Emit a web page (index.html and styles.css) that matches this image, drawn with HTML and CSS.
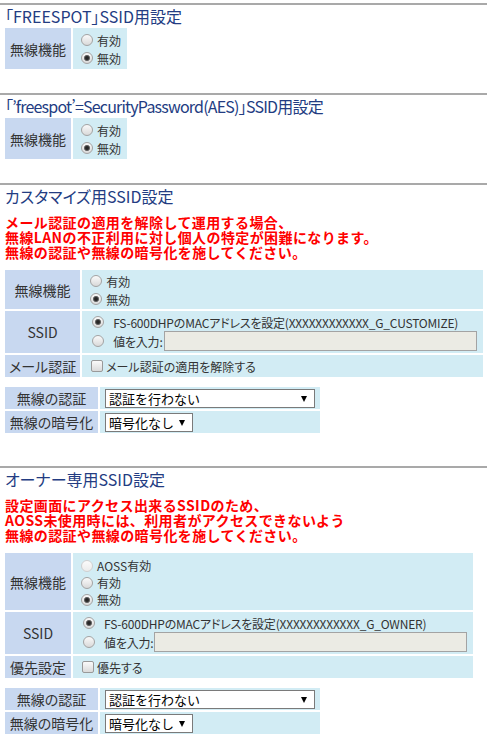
FILE: index.html
```html
<!DOCTYPE html>
<html lang="ja">
<head>
<meta charset="utf-8">
<title>SSID設定</title>
<link rel="stylesheet" href="styles.css">
</head>
<body>
<section class="sec">
  <h2 class="sec-title">「FREESPOT」SSID用設定</h2>
  <table class="form">
    <tr>
      <th class="th-66">無線機能</th>
      <td class="opts opts-a">
        <label class="opt"><input type="radio" class="radio" name="f1">有効</label>
        <label class="opt"><input type="radio" class="radio" name="f1" checked>無効</label>
      </td>
    </tr>
  </table>
</section>

<section class="sec">
  <h2 class="sec-title sec-title-tight">「’freespot’=SecurityPassword(AES)」SSID用設定</h2>
  <table class="form">
    <tr>
      <th class="th-66">無線機能</th>
      <td class="opts opts-a">
        <label class="opt"><input type="radio" class="radio" name="f2">有効</label>
        <label class="opt"><input type="radio" class="radio" name="f2" checked>無効</label>
      </td>
    </tr>
  </table>
</section>

<section class="sec sec-long">
  <h2 class="sec-title">カスタマイズ用SSID設定</h2>
  <p class="note">メール認証の適用を解除して運用する場合、<br>無線LANの不正利用に対し個人の特定が困難になります。<br>無線の認証や無線の暗号化を施してください。</p>
  <table class="form form-main">
    <tr>
      <th class="th-75">無線機能</th>
      <td class="wide opts opts-b">
        <label class="opt"><input type="radio" class="radio" name="c1">有効</label>
        <label class="opt"><input type="radio" class="radio" name="c1" checked>無効</label>
      </td>
    </tr>
    <tr>
      <th>SSID</th>
      <td class="wide ssid">
        <label class="opt"><input type="radio" class="radio" name="c2" checked>FS-600DHPのMACアドレスを設定(XXXXXXXXXXXX_G_CUSTOMIZE)</label>
        <label class="opt opt-input"><input type="radio" class="radio" name="c2">値を入力:<input type="text" class="text" disabled></label>
      </td>
    </tr>
    <tr>
      <th>メール認証</th>
      <td class="wide check">
        <label class="opt"><input type="checkbox" class="checkbox">メール認証の適用を解除する</label>
      </td>
    </tr>
  </table>
  <table class="form form-sel">
    <tr>
      <th class="th-93">無線の認証</th>
      <td class="sel-cell"><span class="sel"><select class="sel-long"><option>認証を行わない</option></select></span></td>
    </tr>
    <tr>
      <th class="th-93">無線の暗号化</th>
      <td class="sel-cell"><span class="sel"><select class="sel-short"><option>暗号化なし</option></select></span></td>
    </tr>
  </table>
</section>

<section class="sec">
  <h2 class="sec-title">オーナー専用SSID設定</h2>
  <p class="note">設定画面にアクセス出来るSSIDのため、<br>AOSS未使用時には、利用者がアクセスできないよう<br>無線の認証や無線の暗号化を施してください。</p>
  <table class="form form-main">
    <tr>
      <th class="th-66">無線機能</th>
      <td class="wide opts opts-c">
        <label class="opt"><input type="radio" class="radio" name="o1" disabled>AOSS有効</label>
        <label class="opt"><input type="radio" class="radio" name="o1">有効</label>
        <label class="opt"><input type="radio" class="radio" name="o1" checked>無効</label>
      </td>
    </tr>
    <tr>
      <th>SSID</th>
      <td class="wide ssid">
        <label class="opt"><input type="radio" class="radio" name="o2" checked>FS-600DHPのMACアドレスを設定(XXXXXXXXXXXX_G_OWNER)</label>
        <label class="opt opt-input"><input type="radio" class="radio" name="o2">値を入力:<input type="text" class="text" disabled></label>
      </td>
    </tr>
    <tr>
      <th>優先設定</th>
      <td class="wide check">
        <label class="opt"><input type="checkbox" class="checkbox">優先する</label>
      </td>
    </tr>
  </table>
  <table class="form form-sel">
    <tr>
      <th class="th-93">無線の認証</th>
      <td class="sel-cell"><span class="sel"><select class="sel-long"><option>認証を行わない</option></select></span></td>
    </tr>
    <tr>
      <th class="th-93">無線の暗号化</th>
      <td class="sel-cell"><span class="sel"><select class="sel-short"><option>暗号化なし</option></select></span></td>
    </tr>
  </table>
</section>
</body>
</html>
```

FILE: styles.css
```css
* { box-sizing: border-box; }

html, body {
  margin: 0;
  padding: 0;
  background: #fff;
}

body {
  padding-top: 3px;
  font-family: "Noto Sans CJK JP", "Noto Sans", sans-serif;
  color: #333;
  font-feature-settings: "palt";
}

.sec {
  border-top: 2px solid #a9a9a9;
  margin-bottom: 22px;
}

.sec-long {
  margin-bottom: 31px;
}

.sec-title {
  margin: 0;
  padding: 2px 0 0 5px;
  font-size: 16px;
  line-height: 19px;
  font-weight: normal;
  color: #233c82;
}

.sec-title-tight {
  letter-spacing: -0.8px;
}

.note {
  margin: 9px 0 0 5px;
  color: #ff0000;
  font-weight: bold;
  font-size: 14px;
  line-height: 15px;
  letter-spacing: 0.4px;
  font-feature-settings: normal;
}

.form {
  border-collapse: separate;
  border-spacing: 2px;
  margin-left: 3px;
}

.form-main {
  margin-top: 8px;
}

.form-sel {
  margin-top: 6px;
}

.form th {
  background: #c8d8f0;
  font-weight: normal;
  font-size: 14px;
  color: #333;
  padding: 0 4px;
  text-align: center;
  white-space: nowrap;
}

.th-66 { width: 66px; }
.th-75 { width: 75px; }
.th-93 { width: 93px; }

.form td {
  background: #d2ecf4;
  font-size: 12px;
  color: #333;
  padding: 0 6px 0 8px;
}

.wide { width: 399px; }

.opt {
  display: flex;
  align-items: center;
  height: 18px;
  white-space: nowrap;
}

.opts-a { padding-top: 3px !important; padding-bottom: 2px !important; }
.opts-b { padding-top: 2px !important; padding-bottom: 1px !important; }
.opts-c { padding-top: 4px !important; padding-bottom: 2px !important; }
.opts-c .opt { height: 17px; }

.ssid { padding-top: 2px !important; padding-bottom: 2px !important; letter-spacing: -0.2px; }
.ssid .opt-input { height: 20px; }
.ssid .radio { margin-left: 2px; margin-right: 9px; }

.check { padding-top: 2px !important; padding-bottom: 2px !important; }

.radio {
  -webkit-appearance: none;
  appearance: none;
  flex: none;
  width: 12px;
  height: 12px;
  margin: 0 4px 0 0;
  border: 1px solid #a3a3a3;
  border-radius: 50%;
  background: linear-gradient(#fafafa, #d9d9d9);
}

.radio:checked {
  background:
    radial-gradient(circle, #1e1e1e 0, #333 1.8px, #777 2.8px, rgba(0,0,0,0) 3.4px),
    linear-gradient(#fafafa, #d9d9d9);
}

.radio:disabled {
  border-color: #d0d0d0;
  background: linear-gradient(#fbfbfb, #ececec);
}

.checkbox {
  -webkit-appearance: none;
  appearance: none;
  flex: none;
  width: 12px;
  height: 12px;
  margin: 0 3px 0 1px;
  border: 1px solid #999;
  border-radius: 2px;
  background: linear-gradient(#fafafa, #dadada);
}

.text {
  flex: none;
  width: 313px;
  height: 20px;
  margin: 0 0 0 1px;
  border: 1px solid #a3a3a3;
  background: #ebebe4;
  padding: 0;
}

.sel-cell {
  height: 22px;
  padding: 0 5px !important;
}

.sel {
  position: relative;
  display: inline-block;
  vertical-align: middle;
}

.sel select {
  -webkit-appearance: none;
  appearance: none;
  display: block;
  height: 19px;
  border: 1px solid #7a7a7a;
  border-radius: 0;
  background: #fff;
  color: #000;
  font-family: "Noto Sans CJK JP", sans-serif;
  font-size: 13px;
  line-height: 17px;
  padding: 0 0 0 3px;
  margin: 0;
}

.sel-long { width: 210px; }
.sel-short { width: 88px; }

.sel::after {
  content: "";
  position: absolute;
  right: 8px;
  top: 7px;
  border-left: 3.5px solid transparent;
  border-right: 3.5px solid transparent;
  border-top: 6px solid #000;
  pointer-events: none;
}
```
